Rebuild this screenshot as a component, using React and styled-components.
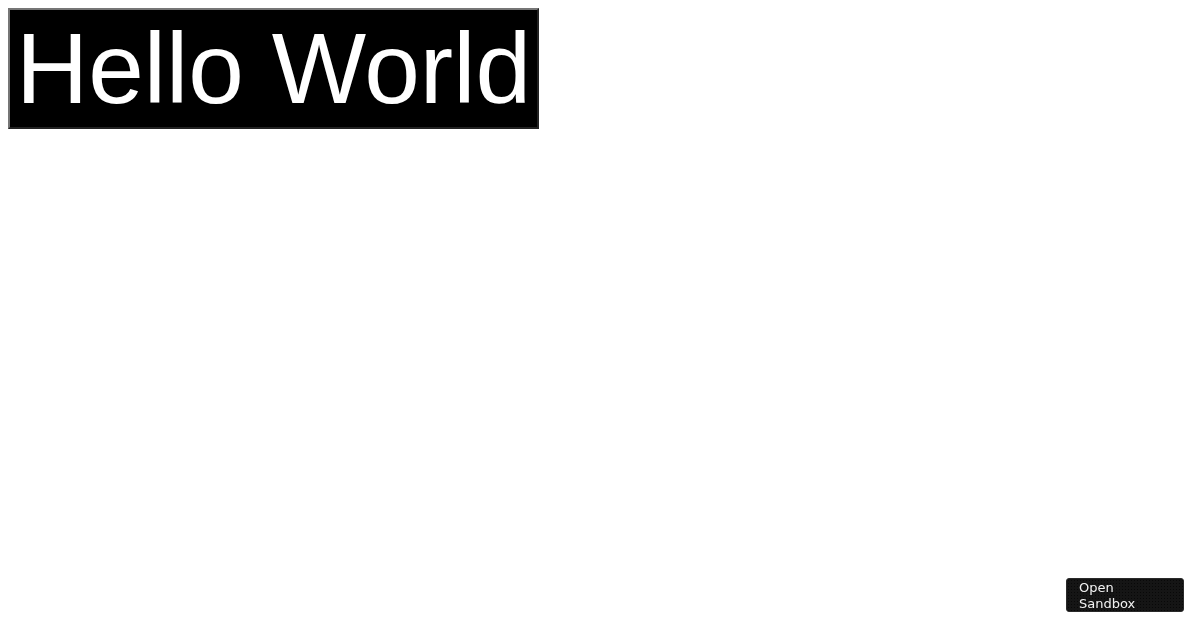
import React from "react";
import styled, { createGlobalStyle } from "styled-components";

const GlobalStyle = createGlobalStyle`
  html, body { margin: 0; padding: 0; background: #ffffff; }
  body { margin: 8px; font-family: "Liberation Sans", Arial, sans-serif; }
`;

const Title = styled.div`
  display: inline-block;
  box-sizing: border-box;
  background: #000000;
  color: #ffffff;
  font-family: "Liberation Sans", Arial, sans-serif;
  font-size: 100px;
  line-height: normal;
  padding: 1px 6px;
  border-style: solid;
  border-width: 2px;
  border-color: #767676 #222222 #222222 #767676;
  white-space: nowrap;
`;

const OpenButton = styled.button`
  position: fixed;
  right: 16px;
  bottom: 18px;
  width: 118px;
  height: 34px;
  box-sizing: border-box;
  padding: 1px 12px;
  margin: 0;
  border: 1px solid #2a2a2a;
  border-radius: 3px;
  background-color: #151515;
  background-image: radial-gradient(rgba(0, 0, 0, 0.6) 0.6px, transparent 0.8px);
  background-size: 3px 3px;
  color: #f2f2f2;
  font-family: "DejaVu Sans", sans-serif;
  font-size: 13px;
  line-height: 16px;
  text-align: left;
  cursor: pointer;
`;

export default function App() {
  return (
    <>
      <GlobalStyle />
      <Title>Hello World</Title>
      <OpenButton>Open Sandbox</OpenButton>
    </>
  );
}
